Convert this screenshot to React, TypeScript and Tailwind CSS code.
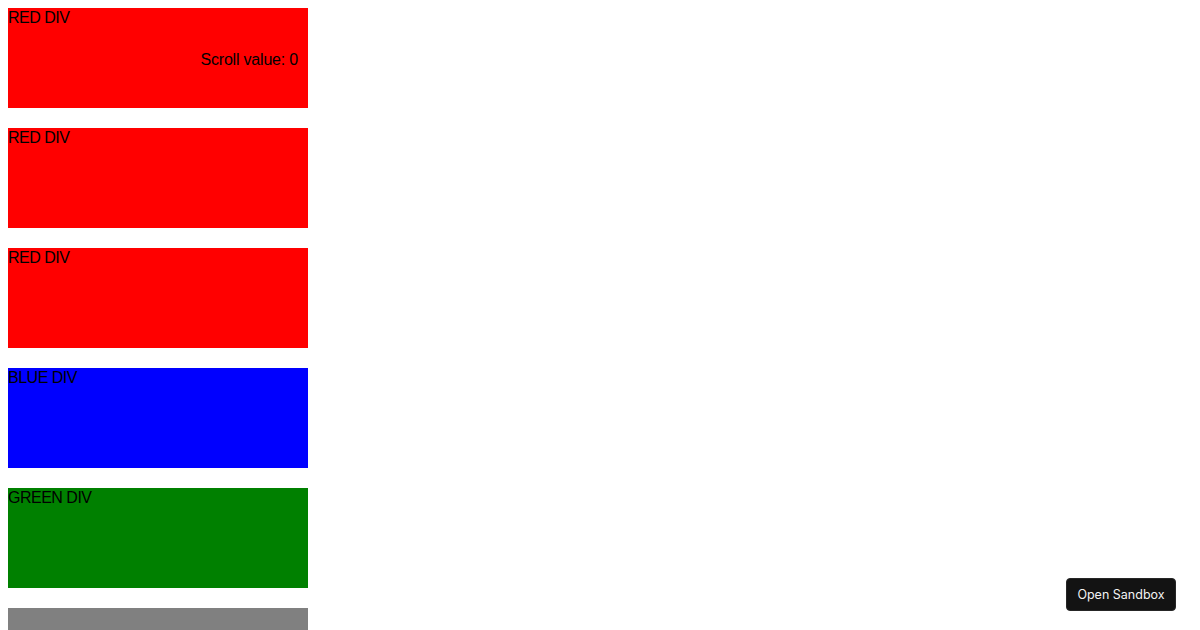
const boxes = [
  { label: "RED DIV", color: "bg-[#ff0000]" },
  { label: "RED DIV", color: "bg-[#ff0000]" },
  { label: "RED DIV", color: "bg-[#ff0000]" },
  { label: "BLUE DIV", color: "bg-[#0000ff]" },
  { label: "GREEN DIV", color: "bg-[#008000]" },
  { label: "", color: "bg-[#808080]" },
];

export default function App() {
  return (
    <div className="relative h-[630px] overflow-hidden bg-white p-2 font-['Liberation_Sans',Arial,sans-serif] text-base leading-[20px] text-black">
      {boxes.map((b, i) => (
        <div key={i} className={`relative mb-5 h-[100px] w-[300px] tracking-[-0.5px] ${b.color}`}>
          {b.label}
          {i === 0 && (
            <span className="absolute right-[10px] top-[42px] tracking-[-0.2px]">Scroll value: 0</span>
          )}
        </div>
      ))}
      <button className="fixed bottom-[19px] right-[24px] flex h-[33px] w-[110px] items-center justify-center rounded-[4px] border border-[#262626] bg-[#131313] font-['Inter',sans-serif] text-[12.5px] text-[#f2f2f2]">
        Open Sandbox
      </button>
    </div>
  );
}
